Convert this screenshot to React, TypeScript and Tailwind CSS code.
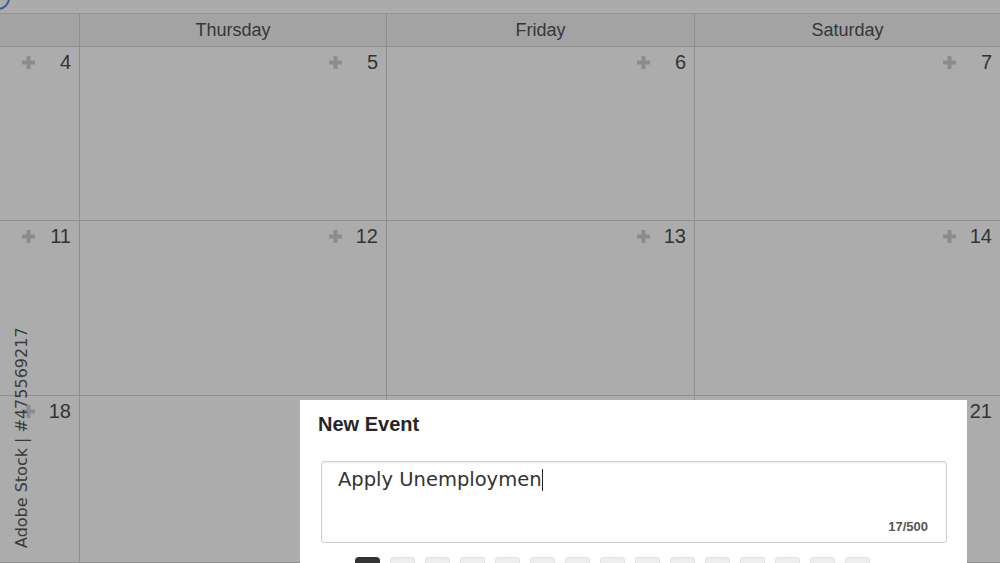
import React from "react";

const Plus = () => (
  <svg width="15" height="15" viewBox="0 0 15 15" className="block">
    <rect x="5.5" y="1" width="4" height="13" fill="#8c8c8c" />
    <rect x="1" y="5.5" width="13" height="4" fill="#8c8c8c" />
  </svg>
);

function Cell({ n, last }: { n?: string; last?: boolean }) {
  return (
    <div className={`relative ${last ? "" : "border-r border-[#8e8e8e]"} border-b border-[#8e8e8e] bg-[#acacac]`}>
      {n && (
        <div className="flex items-center justify-end pr-[8px] pt-[4px]">
          <Plus />
          <span className="w-[35px] text-right text-[20px] leading-[22px] text-[#333]" style={{ fontFamily: "'Liberation Sans', Arial, sans-serif" }}>
            {n}
          </span>
        </div>
      )}
    </div>
  );
}

export default function App() {
  const days = ["Thursday", "Friday", "Saturday"];
  const rows = [
    ["4", "5", "6", "7"],
    ["11", "12", "13", "14"],
    ["18", "", "", "21"],
  ];
  return (
    <div className="relative w-[1000px] h-[563px] overflow-hidden bg-[#acacac]" style={{ fontFamily: "'Liberation Sans', Arial, sans-serif" }}>
      <div className="h-[14px] bg-[#ababab] border-b border-[#959595] relative">
        <div className="absolute -left-[14px] -top-[14px] w-[24px] h-[24px] rounded-full border-2 border-[#3d5a9e]" />
      </div>
      <div className="grid grid-cols-[80px_307px_308px_305px] grid-rows-[33px_174px_175px_1fr] h-[549px]">
        <div className="bg-[#a3a3a3] border-r border-b border-[#8e8e8e]" />
        {days.map((d, i) => (
          <div
            key={d}
            className={`bg-[#a3a3a3] border-b border-[#8e8e8e] ${i < 2 ? "border-r" : ""} flex items-center justify-center text-[18px] text-[#363636]`}
          >
            {d}
          </div>
        ))}
        {rows.map((r, ri) =>
          r.map((n, ci) => <Cell key={`${ri}-${ci}`} n={n || undefined} last={ci === 3} />)
        )}
      </div>

      <div
        className="absolute left-[13px] bottom-[15px] origin-bottom-left -rotate-90 translate-x-[19px] whitespace-nowrap text-[16px] leading-[20px] text-[#3a3a3a]"
        style={{ fontFamily: "'DejaVu Sans', Verdana, sans-serif" }}
      >
        Adobe Stock | #475569217
      </div>

      <div className="absolute left-[300px] top-[400px] w-[667px] h-[200px] bg-white">
        <div className="pl-[18px] pt-[11px] text-[20px] font-bold text-[#262626] leading-[26px]">New Event</div>
        <div className="ml-[21px] mt-[24px] w-[626px] h-[82px] border border-[#cfcfcf] rounded-[3px] relative shadow-[inset_0_1px_2px_rgba(0,0,0,0.08)]">
          <div className="pl-[16px] pt-[5px] text-[19.5px] leading-[26px] text-[#333] flex items-center" style={{ fontFamily: "'DejaVu Sans', Verdana, sans-serif" }}>
            Apply Unemploymen<span className="inline-block w-[1px] h-[22px] bg-[#222]" />
          </div>
          <div className="absolute right-[18px] bottom-[6px] text-[13px] font-bold text-[#555]">17/500</div>
        </div>
        <div className="flex gap-[10px] pl-[55px] mt-[14px]">
          <div className="w-[25px] h-[22px] rounded-[4px] bg-[#333]" />
          {Array.from({ length: 14 }).map((_, i) => (
            <div key={i} className="w-[25px] h-[22px] rounded-[3px] bg-[#eeeeee] border border-[#e3e3e3]" />
          ))}
        </div>
      </div>
    </div>
  );
}
